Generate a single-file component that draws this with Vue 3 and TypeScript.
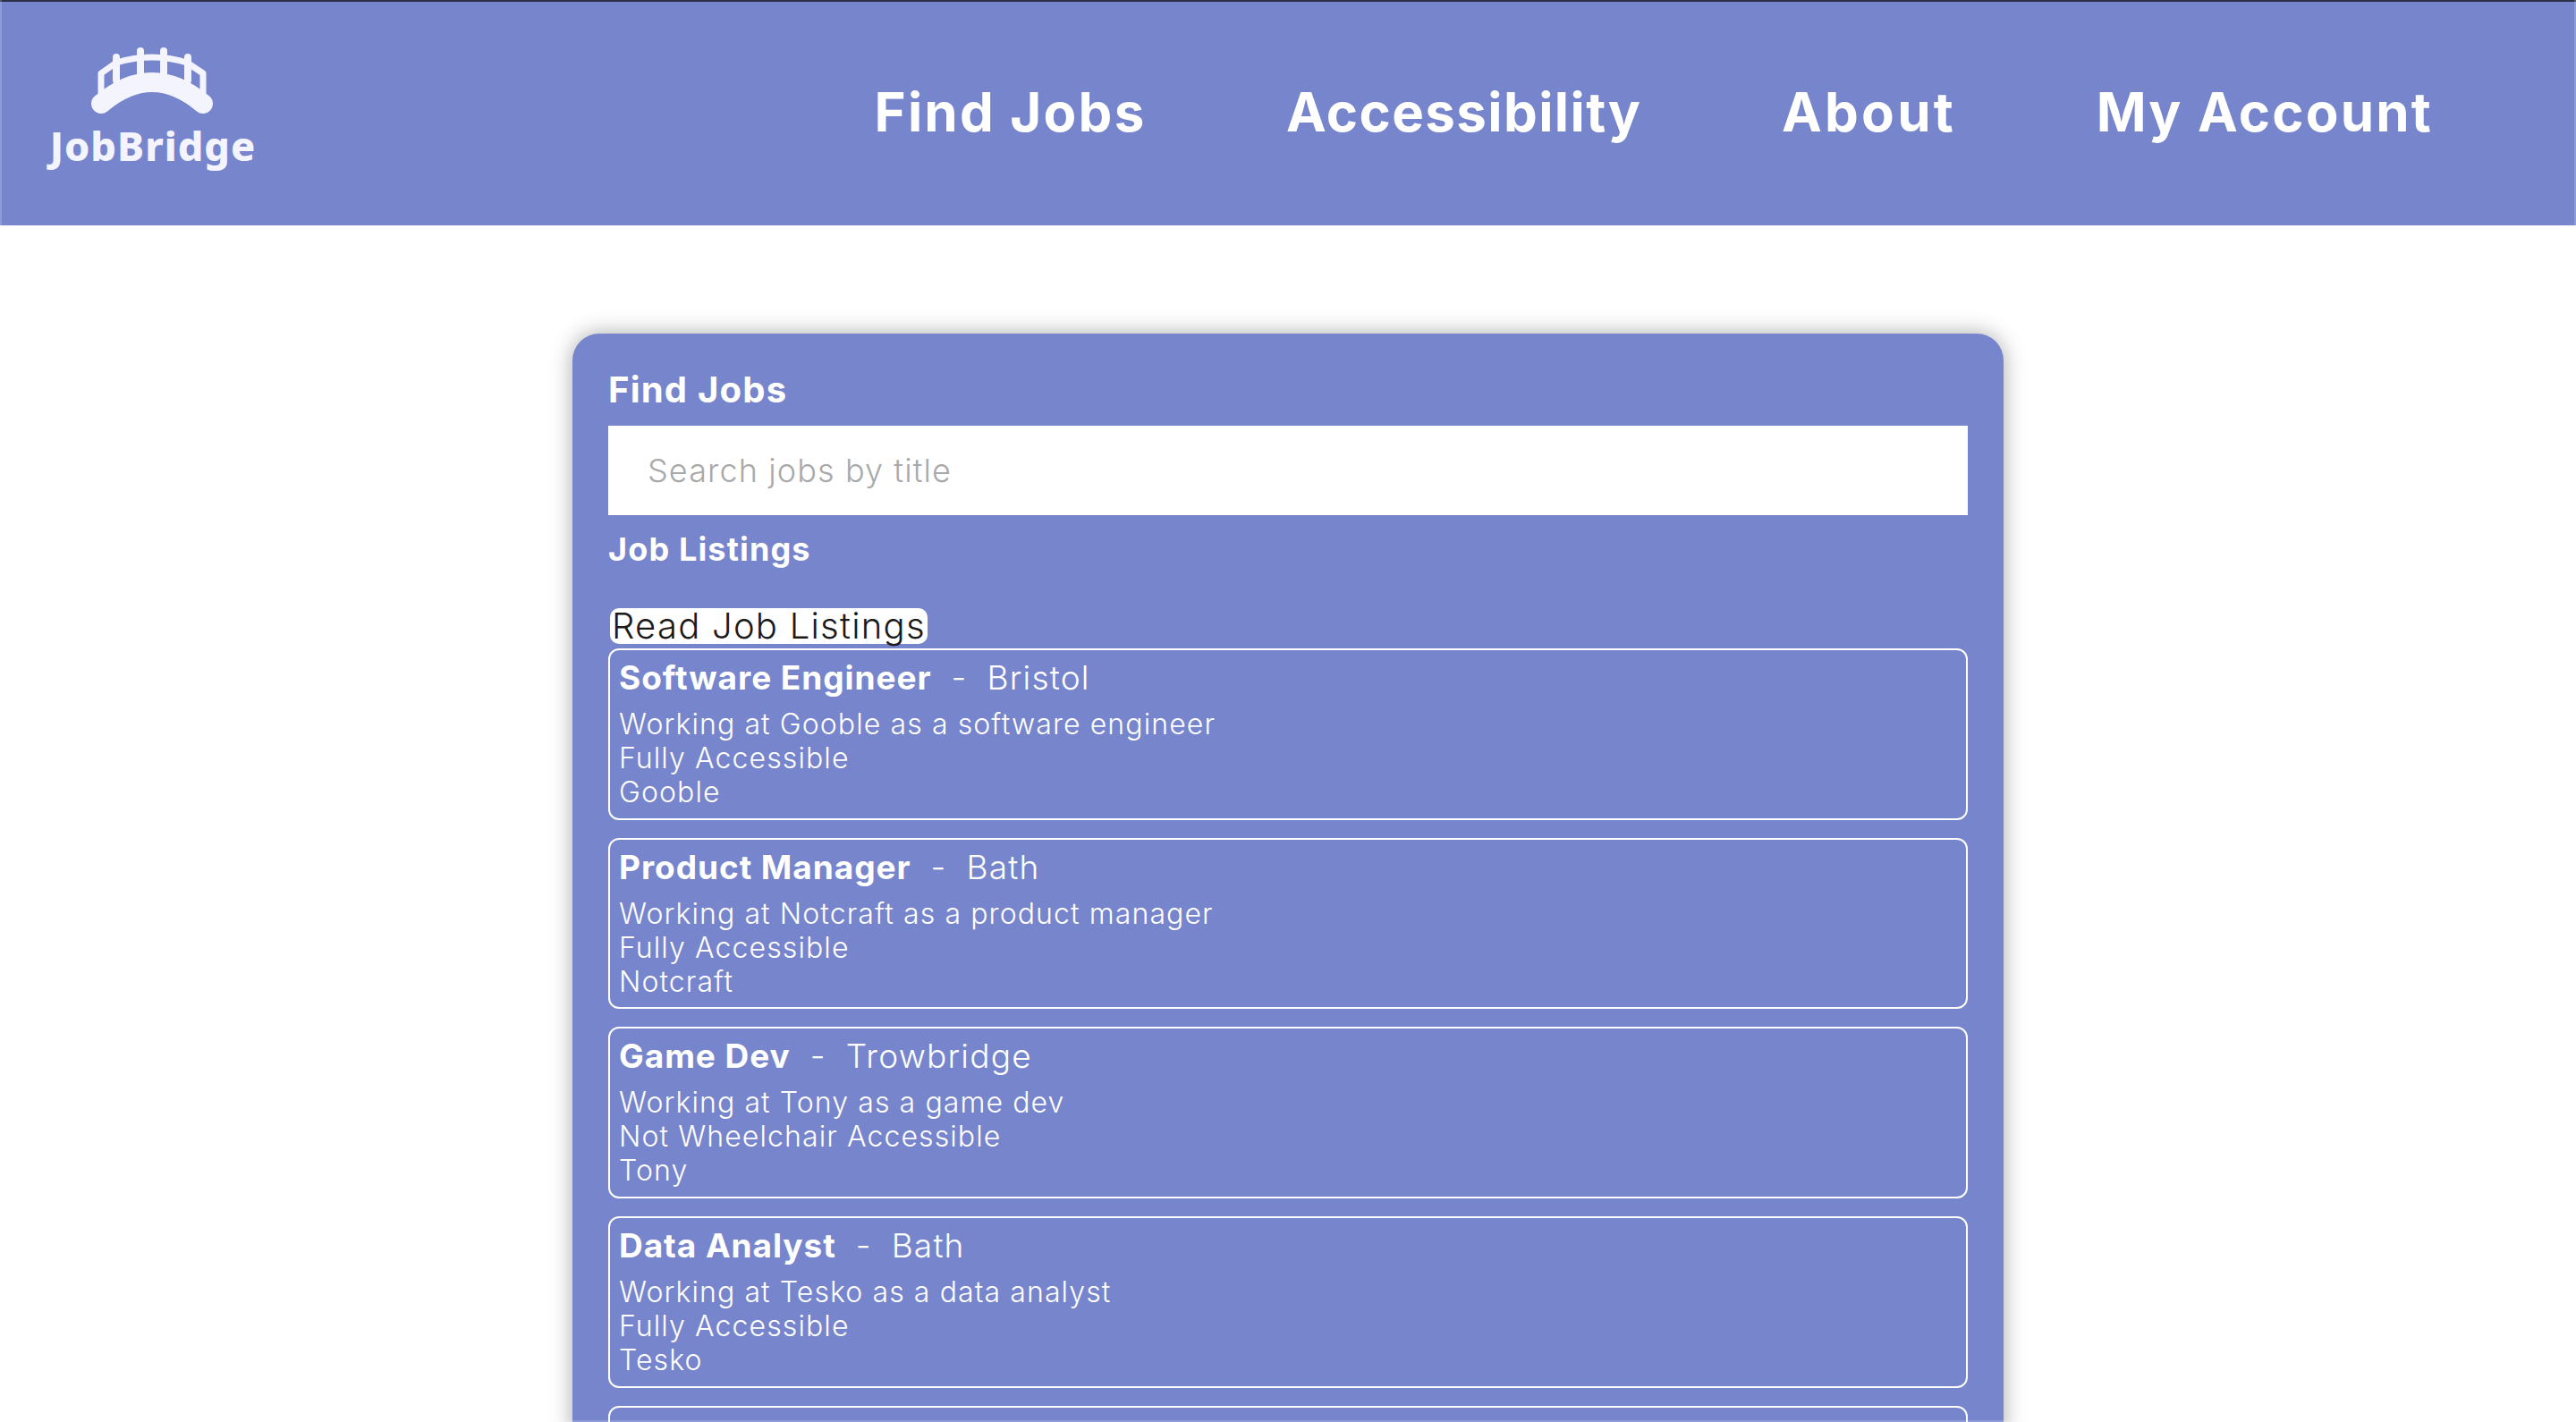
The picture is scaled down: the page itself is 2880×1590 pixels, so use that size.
<script setup lang="ts">
interface Job { title: string; place: string; desc: string; access: string; company: string }
const nav: string[] = ['Find Jobs', 'Accessibility', 'About', 'My Account']
const jobs: Job[] = [
  { title: 'Software Engineer', place: 'Bristol', desc: 'Working at Gooble as a software engineer', access: 'Fully Accessible', company: 'Gooble' },
  { title: 'Product Manager', place: 'Bath', desc: 'Working at Notcraft as a product manager', access: 'Fully Accessible', company: 'Notcraft' },
  { title: 'Game Dev', place: 'Trowbridge', desc: 'Working at Tony as a game dev', access: 'Not Wheelchair Accessible', company: 'Tony' },
  { title: 'Data Analyst', place: 'Bath', desc: 'Working at Tesko as a data analyst', access: 'Fully Accessible', company: 'Tesko' },
]
</script>

<template>
  <div class="page">
    <header class="header">
      <div class="logo">
        <svg class="mark" viewBox="100 45 140 85" width="140" height="85" aria-hidden="true">
          <path d="M113 116 Q170 68 227 116" fill="none" stroke="#f3f4fe" stroke-width="22" stroke-linecap="round" />
          <path d="M113 105 V82 L130 70 Q170 58 209 70 L227 82 V105" fill="none" stroke="#f3f4fe" stroke-width="7" stroke-linejoin="round" />
          <path d="M130 64 V90 M157 57 V86 M183 57 V86 M210 64 V90" fill="none" stroke="#f3f4fe" stroke-width="8" stroke-linecap="round" />
        </svg>
        <span class="logo-text">JobBridge</span>
      </div>
      <nav class="nav">
        <a v-for="item in nav" :key="item" class="nav-link">{{ item }}</a>
      </nav>
    </header>
    <main class="main">
      <section class="card">
        <h2 class="title">Find Jobs</h2>
        <input class="search" type="text" placeholder="Search jobs by title" />
        <h3 class="subtitle">Job Listings</h3>
        <button class="read" type="button">Read Job Listings</button>
        <ul class="list">
          <li v-for="job in jobs" :key="job.title" class="job">
            <div class="job-head"><strong>{{ job.title }}</strong><span>-</span><span>{{ job.place }}</span></div>
            <div class="job-line first">{{ job.desc }}</div>
            <div class="job-line">{{ job.access }}</div>
            <div class="job-line">{{ job.company }}</div>
          </li>
          <li class="job"></li>
        </ul>
      </section>
    </main>
    <div class="edge"></div>
  </div>
</template>

<style>
html, body { margin: 0; height: 100%; overflow: hidden; background: #fff; }
</style>

<style scoped>
.page { position: relative; height: 1590px; overflow: hidden; font-family: Inter, "Noto Sans", sans-serif; color: #fff; background: #fff; }
.edge { position: absolute; inset: 0; box-sizing: border-box; border: solid rgba(255, 255, 255, .18); border-width: 0 2px 2px; pointer-events: none; }
.header { height: 250px; border-top: 2px solid #2b2f45; background: #7785cd; display: flex; align-items: flex-start; justify-content: space-between; padding: 0 160px 0 54px; }
.logo { width: 232px; display: flex; flex-direction: column; align-items: center; margin-top: 43px; }
.mark { display: block; }
.logo-text { font-family: "Noto Sans", sans-serif; font-weight: 800; font-size: 45px; line-height: 50px; color: #f3f4fe; margin: 8px 0 0 2px; letter-spacing: 1px; }
.nav { display: flex; gap: 156.5px; margin-top: 87px; }
.nav-link { font-weight: 700; font-size: 60px; line-height: 72px; letter-spacing: 2.2px; color: #fff; }
.nav-link:nth-child(2) { letter-spacing: 1.4px; }
.nav-link:nth-child(3) { letter-spacing: 3.3px; }
.card { width: 1600px; box-sizing: border-box; padding: 40px; background: #7785cd; border-radius: 30px; box-shadow: 0 0 24px rgba(0, 0, 0, .34); }
.main { display: flex; justify-content: center; padding-top: 121px; }
.title { margin: 0; font-size: 40px; line-height: 46px; font-weight: 700; letter-spacing: 1.2px; }
.search { display: block; width: 100%; height: 100px; box-sizing: border-box; margin-top: 17px; padding: 0 44px; border: 0; border-radius: 0; background: #fff; font: 300 36px Inter, sans-serif; letter-spacing: 1.1px; outline: 0; }
.search::placeholder { color: #a9a9a9; opacity: 1; }
.subtitle { margin: 16px 0 0; font-size: 36px; line-height: 44px; font-weight: 700; letter-spacing: 1.15px; }
.read { display: block; margin: 44px 0 0 2px; padding: 0 2px; height: 40px; border: 0; border-radius: 10px; background: #fff; color: #1a1a1a; font: 300 40px/40px Inter, sans-serif; letter-spacing: 1.25px; white-space: nowrap; }
.list { list-style: none; margin: 5px 0 0; padding: 0; display: flex; flex-direction: column; gap: 20px; }
.job { height: 191.67px; flex: none; box-sizing: border-box; border: 2px solid #fff; border-radius: 12px; padding: 9px 10px; }
.job-head { display: flex; gap: 22px; font-size: 37px; line-height: 44px; font-weight: 300; letter-spacing: 1.2px; }
.job-head strong { font-weight: 700; letter-spacing: .95px; }
.job-line { font-size: 32px; line-height: 38px; font-weight: 300; letter-spacing: 1.1px; white-space: nowrap; }
.job-line.first { margin-top: 11px; }
</style>
